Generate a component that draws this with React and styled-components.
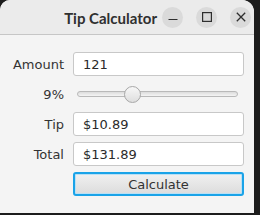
import React from 'react'
import styled, { createGlobalStyle } from 'styled-components'

const GlobalStyle = createGlobalStyle`
  html, body {
    margin: 0;
    padding: 0;
    background: #1c1c1c;
  }
  body {
    font-family: "DejaVu Sans", sans-serif;
  }
`

const slider = { value: 9, min: 0, max: 28 }

function App() {
  const pct = (slider.value - slider.min) / (slider.max - slider.min)

  return (
    <>
      <GlobalStyle />
      <Desktop>
        <Window>
          <TitleBar>
            <Title>Tip Calculator</Title>
            <Controls>
              <WinButton aria-label="minimize">
                <svg width="10" height="10" viewBox="0 0 10 10">
                  <path d="M0.5 7.5h9" stroke="#2e2e2e" strokeWidth="1.2" />
                </svg>
              </WinButton>
              <WinButton aria-label="maximize">
                <svg width="10" height="10" viewBox="0 0 10 10">
                  <rect x="0.6" y="0.6" width="8.8" height="8.8" fill="none" stroke="#2e2e2e" strokeWidth="1.2" />
                </svg>
              </WinButton>
              <WinButton aria-label="close">
                <svg width="10" height="10" viewBox="0 0 10 10">
                  <path d="M0.8 0.8l8.4 8.4M9.2 0.8l-8.4 8.4" stroke="#2e2e2e" strokeWidth="1.3" />
                </svg>
              </WinButton>
            </Controls>
          </TitleBar>
          <Content>
            <Label>Amount</Label>
            <Field>121</Field>

            <Label>{slider.value}%</Label>
            <SliderBox>
              <Track />
              <Thumb style={{ left: `calc((100% - 16px) * ${pct})` }} />
            </SliderBox>

            <Label>Tip</Label>
            <Field>$10.89</Field>

            <Label>Total</Label>
            <Field>$131.89</Field>

            <span />
            <Button>Calculate</Button>
          </Content>
        </Window>
      </Desktop>
    </>
  )
}

export default App

const Desktop = styled.div`
  width: 260px;
  height: 215px;
  background: #1c1c1c;
  overflow: hidden;
`

const Window = styled.div`
  width: 254px;
  height: 213px;
  background: #f4f4f4;
  border-radius: 10px 12px 0 0;
  overflow: hidden;
`

const TitleBar = styled.div`
  height: 34px;
  background: #ebebeb;
  border-bottom: 1px solid #c6c6c6;
  display: flex;
  align-items: center;
  justify-content: flex-end;
  padding-right: 3px;
`

const Title = styled.div`
  font-family: Lato, "Liberation Sans", sans-serif;
  font-weight: 700;
  font-size: 15px;
  color: #303030;
  margin-right: 5px;
  padding-top: 1px;
`

const Controls = styled.div`
  display: flex;
  gap: 13px;
`

const WinButton = styled.div`
  width: 21px;
  height: 21px;
  border-radius: 50%;
  background: #dadada;
  display: flex;
  align-items: center;
  justify-content: center;
`

const Content = styled.div`
  display: grid;
  grid-template-columns: 64px 171px;
  column-gap: 9px;
  row-gap: 6px;
  grid-auto-rows: 24px;
  padding-top: 17px;
`

const Label = styled.div`
  font-size: 13px;
  color: #333;
  text-align: right;
  align-self: center;
`

const Field = styled.div`
  box-sizing: border-box;
  height: 24px;
  background: #fff;
  border: 1px solid #c8c8c8;
  border-radius: 3px;
  padding-left: 9px;
  font-size: 13px;
  color: #2a2a2a;
  display: flex;
  align-items: center;
`

const SliderBox = styled.div`
  position: relative;
  margin: 0 6px 0 4px;
  display: flex;
  align-items: center;
  top: 0px;
`

const Track = styled.div`
  box-sizing: border-box;
  width: 100%;
  height: 6px;
  border: 1px solid #b9b9b9;
  border-radius: 3px;
  background: linear-gradient(#dcdcdc, #f4f4f4);
`

const Thumb = styled.div`
  position: absolute;
  top: 4px;
  box-sizing: border-box;
  width: 17px;
  height: 17px;
  border-radius: 50%;
  border: 1px solid #a8a8a8;
  background: linear-gradient(#f7f7f7, #dedede);
`

const Button = styled.div`
  box-sizing: border-box;
  height: 24px;
  border: 2px solid #1aa3e8;
  border-radius: 3px;
  box-shadow: inset 0 0 0 1px #b9e0f5;
  background: linear-gradient(#f0f0f0, #dcdcdc);
  font-size: 13px;
  color: #333;
  display: flex;
  align-items: center;
  justify-content: center;
`
